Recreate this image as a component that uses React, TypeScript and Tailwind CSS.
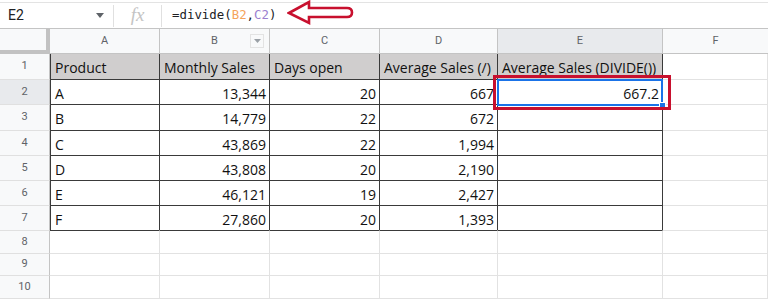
import React from "react";

const cols = [50, 110, 110, 110, 118, 165, 105];
const rowH = [26, 25, 26, 25, 25, 25, 25, 23, 22, 23];
const letters = ["A", "B", "C", "D", "E", "F"];

type Cell = { t: string; r?: boolean };
const data: Cell[][] = [
  [{ t: "Product" }, { t: "Monthly Sales" }, { t: "Days open" }, { t: "Average Sales (/)" }, { t: "Average Sales (DIVIDE())" }],
  [{ t: "A" }, { t: "13,344", r: true }, { t: "20", r: true }, { t: "667", r: true }, { t: "667.2", r: true }],
  [{ t: "B" }, { t: "14,779", r: true }, { t: "22", r: true }, { t: "672", r: true }, { t: "" }],
  [{ t: "C" }, { t: "43,869", r: true }, { t: "22", r: true }, { t: "1,994", r: true }, { t: "" }],
  [{ t: "D" }, { t: "43,808", r: true }, { t: "20", r: true }, { t: "2,190", r: true }, { t: "" }],
  [{ t: "E" }, { t: "46,121", r: true }, { t: "19", r: true }, { t: "2,427", r: true }, { t: "" }],
  [{ t: "F" }, { t: "27,860", r: true }, { t: "20", r: true }, { t: "1,393", r: true }, { t: "" }],
];

export default function App() {
  const gridCols = cols.map((c) => c + "px").join(" ");
  return (
    <div className="relative w-[768px] h-[302px] overflow-hidden bg-white" style={{ fontFamily: "Roboto, 'Liberation Sans', sans-serif" }}>
      {/* formula bar */}
      <div className="mt-[2px] h-[26px] border-t border-[#e3e3e3] flex items-center text-[#202124]">
        <div className="w-[113px] flex items-center pl-[8px] pr-[9px] h-full">
          <span className="text-[14px] flex-1">E2</span>
          <svg width="8" height="5" viewBox="0 0 8 5"><path d="M0 0 L8 0 L4 5 Z" fill="#5f6368" /></svg>
        </div>
        <div className="w-px h-[22px] bg-[#e0e0e0]" />
        <div className="w-[47px] flex justify-center items-center h-full">
          <span className="text-[19px] italic text-[#c4c4c4]" style={{ fontFamily: "'Liberation Serif', serif" }}>fx</span>
        </div>
        <div className="w-px h-[22px] bg-[#e0e0e0]" />
        <div className="pl-[10px] text-[13px] text-[#202124]" style={{ fontFamily: "'DejaVu Sans Mono', 'Liberation Mono', monospace", fontSize: "12.4px" }}>
          =divide(<span className="text-[#f5a35b]">B2</span>,<span className="text-[#9b7fd0]">C2</span>)
        </div>
      </div>

      {/* grid */}
      <div className="grid border-t border-[#c4c4c4]" style={{ gridTemplateColumns: gridCols }}>
        {/* header row */}
        <div className="h-[25px] bg-[#f8f9fa] border-r-[4px] border-b-[4px] border-[#c2c2c2]" />
        {letters.map((l, i) => (
          <div
            key={l}
            className={`h-[25px] flex items-center justify-center text-[11px] text-[#5f6368] border-b border-[#c4c4c4] ${
              l === "E" ? "bg-[#e8eaed]" : "bg-[#f8f9fa]"
            } ${i < 5 ? "border-r border-r-[#c4c4c4]" : ""} relative`}
          >
            {l}
            {l === "B" && (
              <div className="absolute right-[5px] top-[5px] w-[14px] h-[14px] border border-[#e3e3e3] flex items-center justify-center">
                <svg width="7" height="4" viewBox="0 0 7 4"><path d="M0 0 L7 0 L3.5 4 Z" fill="#9aa0a6" /></svg>
              </div>
            )}
          </div>
        ))}

        {rowH.map((h, ri) => {
          const rn = ri + 1;
          const inData = rn <= 7;
          return (
            <React.Fragment key={rn}>
              <div
                className={`flex items-center justify-center text-[11px] text-[#5f6368] border-r border-b ${
                  rn === 2 ? "bg-[#e8eaed]" : "bg-[#f8f9fa]"
                } border-b-[#e0e0e0] border-r-[#c4c4c4]`}
                style={{ height: h }}
              >
                {rn}
              </div>
              {letters.map((l, ci) => {
                const dataCell = inData && ci < 5;
                const cell = dataCell ? data[ri][ci] : null;
                let cls = "flex items-center pt-[2px] border-r border-b text-[14px] text-[#111] ";
                if (dataCell) {
                  cls += "border-r-[#3a3a3a] border-b-[#3a3a3a] ";
                  if (rn === 1) cls += "bg-[#d0cece] ";
                  if (ci === 0) cls += "border-l border-l-[#3a3a3a] ";
                } else {
                  cls += "border-r-[#e2e2e2] border-b-[#e2e2e2] ";
                  if (rn === 8 && ci < 5) cls += "border-t border-t-[#3a3a3a] ";
                }
                if (cell?.r) cls += "justify-end pr-[3px] ";
                else cls += "pl-[4px] ";
                return (
                  <div
                    key={l}
                    className={cls + "whitespace-nowrap overflow-hidden"}
                    style={{ height: h, fontFamily: "'Open Sans', 'Noto Sans', sans-serif", ...(rn === 8 && ci < 5 ? { marginTop: -1, height: h + 1 } : {}) }}
                  >
                    {cell?.t}
                  </div>
                );
              })}
            </React.Fragment>
          );
        })}
      </div>

      {/* selection E2 */}
      <div className="absolute left-[497px] top-[79px] w-[166px] h-[27px] border-2 border-[#1a73e8]" />
      <div className="absolute left-[659px] top-[102px] w-[7px] h-[7px] bg-[#1a73e8] border border-white" />
      {/* red annotation box */}
      <div className="absolute left-[493px] top-[75px] w-[178px] h-[35px] border-[3px] border-[#c8102e]" />
      {/* red arrow */}
      <svg className="absolute left-[287px] top-[0px]" width="68" height="26" viewBox="0 0 68 26">
        <path
          d="M2 13 L22 2 L22 8 L60 8 Q65 8 65 12.5 Q65 17 60 17 L22 17 L22 23 Z"
          fill="white"
          stroke="#c8102e"
          strokeWidth="2.6"
          strokeLinejoin="miter"
        />
      </svg>
    </div>
  );
}
